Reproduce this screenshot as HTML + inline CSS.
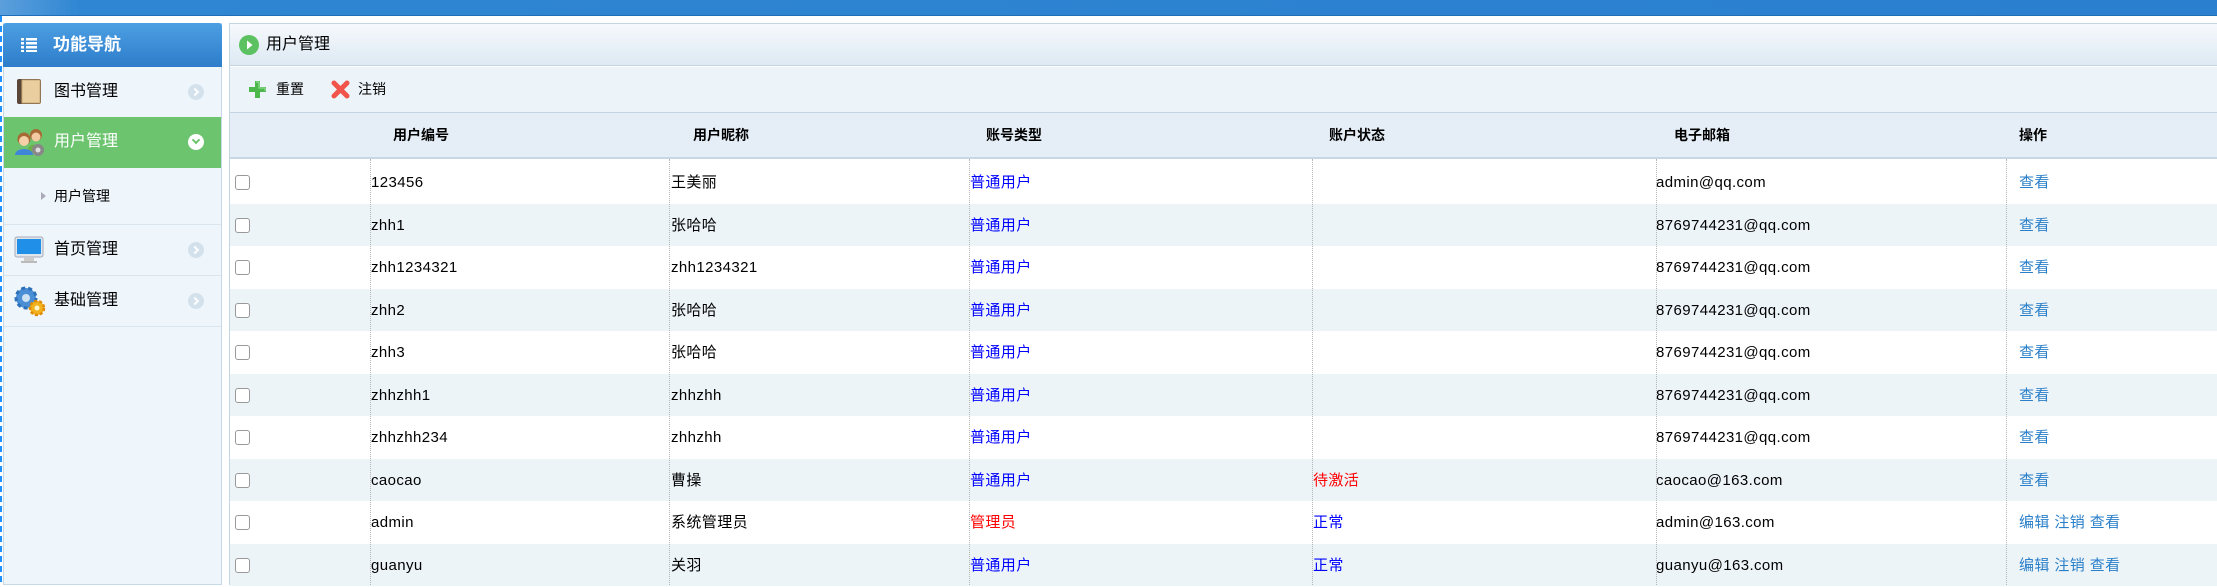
<!DOCTYPE html>
<html><head><meta charset="utf-8"><style>
*{margin:0;padding:0;box-sizing:border-box}
body{width:2217px;height:585px;overflow:hidden;background:#fff;font-family:"Liberation Sans","Noto Sans CJK SC",sans-serif;position:relative}
.abs{position:absolute}
#top{left:0;top:0;width:2217px;height:16px;background:linear-gradient(90deg,#5b9fdc 0,#2f86d2 80px,#2a80cf 100%);border-bottom:1px solid #1f6fb8}
#dash{left:0;top:16px;width:2px;height:569px;background:repeating-linear-gradient(180deg,#1e90ff 0 6px,transparent 6px 10px)}
#side{left:3px;top:23px;width:219px;height:562px;background:#eff6fb;border:1px solid #c8d9e6;border-top:none}
#sh{left:3px;top:23px;width:219px;height:44px;background:linear-gradient(#4d9fe3,#2d7dca);border-radius:3px 3px 0 0;color:#fff;font-weight:bold;font-size:17px}
.item{left:4px;width:217px;height:51px;border-bottom:1px solid #d9e6ef;font-size:16px;color:#000}
.item span{position:absolute;left:50px;top:0;line-height:50px}
.arr{position:absolute;left:184px;top:17px;width:16px;height:16px;border-radius:50%;background:#d3e1ec}
.arr:after{content:"";position:absolute;left:4px;top:5px;width:4px;height:4px;border-right:2px solid #fff;border-top:2px solid #fff;transform:rotate(45deg)}
#main{left:229px;top:23px;width:1988px;height:562px;border:1px solid #c5d6e3;border-right:none;background:#fff}
#title{left:230px;top:24px;width:1987px;height:42px;background:linear-gradient(#f6f9fc,#dde9f3);border-bottom:1px solid #c3d5e3;font-size:16px}
#tool{left:230px;top:67px;width:1987px;height:46px;background:#edf4f9;border-bottom:1px solid #c3d5e3;font-size:14px}
#thead{left:230px;top:113px;width:1987px;height:46px;background:#e5eef6;border-bottom:2px solid #c8d7e4;font-size:14px;font-weight:bold}
#thead span{position:absolute;top:0;line-height:44px;transform:translateX(-50%)}
.row{left:230px;width:1987px;height:42.5px;font-size:15px;letter-spacing:0.4px}
.row.alt{background:#edf4f8}
.row span{position:absolute;top:0;line-height:43px;white-space:nowrap}
.cb{position:absolute;left:5px;top:14px;width:15px;height:15px;border:1px solid #999;border-radius:3px;background:#fff}
.vl{position:absolute;top:159px;height:426px;border-left:1px dotted #b5b5b5}
.b{color:#0000ff}.r{color:#ff0000}.l{color:#2a7fc9}
</style></head><body>
<div id="top" class="abs"></div>
<div id="dash" class="abs"></div>
<div id="side" class="abs"></div>
<div id="sh" class="abs">
 <svg class="abs" style="left:18px;top:15px" width="16" height="14"><g fill="#fff"><rect x="0" y="0" width="3" height="2.5"/><rect x="5" y="0" width="11" height="2.5"/><rect x="0" y="4" width="3" height="2.5"/><rect x="5" y="4" width="11" height="2.5"/><rect x="0" y="8" width="3" height="2.5"/><rect x="5" y="8" width="11" height="2.5"/><rect x="0" y="12" width="3" height="2"/><rect x="5" y="12" width="11" height="2"/></g></svg>
 <span class="abs" style="left:50px;top:0;line-height:44px">功能导航</span>
</div>
<div class="item abs" style="top:67px">
 <svg class="abs" style="left:12px;top:11px" width="26" height="27"><rect x="1" y="1" width="24" height="25" rx="2" fill="#5a4638"/><rect x="6" y="2" width="18" height="23" fill="#e9cfa0"/><rect x="6" y="2" width="18" height="23" fill="none" stroke="#c9a875"/></svg>
 <span>图书管理</span><i class="arr"></i></div>
<div class="item abs" style="top:117px;background:#6cc46f;border-bottom:none;height:51px">
 <svg class="abs" style="left:10px;top:10px" width="32" height="30"><circle cx="22" cy="8" r="6" fill="#a86a34"/><circle cx="22" cy="10" r="4.5" fill="#f2c9a0"/><path d="M14 22c0-6 16-6 16 0v3H14z" fill="#6db04a"/><circle cx="10" cy="12" r="6.5" fill="#a86a34"/><circle cx="10" cy="14" r="5" fill="#f5cfa8"/><path d="M1 28c0-8 18-8 18 0z" fill="#3f86d8"/><circle cx="24" cy="23" r="6" fill="#888"/><circle cx="24" cy="23" r="2.5" fill="#ddd"/></svg>
 <span style="color:#fff">用户管理</span>
 <i class="abs" style="left:184px;top:17px;width:16px;height:16px;border-radius:50%;background:#fff"></i>
 <i class="abs" style="left:189px;top:20px;width:6px;height:6px;border-right:2px solid #6cc46f;border-bottom:2px solid #6cc46f;transform:rotate(45deg)"></i>
</div>
<div class="item abs" style="top:168px;height:57px">
 <i class="abs" style="left:37px;top:24px;width:0;height:0;border-left:5px solid #aab;border-top:4px solid transparent;border-bottom:4px solid transparent"></i>
 <span style="left:50px;line-height:56px;font-size:14px">用户管理</span></div>
<div class="item abs" style="top:225px">
 <svg class="abs" style="left:10px;top:11px" width="30" height="28"><rect x="1" y="1" width="28" height="20" rx="2" fill="#dfe6ec" stroke="#aab"/><rect x="3" y="3" width="24" height="15" fill="#1f8fe8"/><rect x="10" y="21" width="10" height="4" fill="#ccc"/><rect x="7" y="25" width="16" height="2" fill="#bbb"/></svg>
 <span>首页管理</span><i class="arr"></i></div>
<div class="item abs" style="top:276px">
 <svg class="abs" style="left:10px;top:9px" width="32" height="32"><circle cx="12" cy="13" r="10" fill="#4a8ed6" stroke="#2d6fb8" stroke-width="3" stroke-dasharray="4 3"/><circle cx="12" cy="13" r="4" fill="#cfe2f5"/><circle cx="23" cy="23" r="7" fill="#f2b21e" stroke="#e08a00" stroke-width="2.5" stroke-dasharray="3 2"/><circle cx="23" cy="23" r="2.5" fill="#fff5cc"/></svg>
 <span>基础管理</span><i class="arr"></i></div>

<div id="main" class="abs"></div>
<div id="title" class="abs">
 <svg class="abs" style="left:9px;top:11px" width="20" height="20"><circle cx="10" cy="10" r="10" fill="#5cc160"/><path d="M8 5.5L13.5 10 8 14.5z" fill="#fff"/></svg>
 <span class="abs" style="left:36px;top:0;line-height:42px">用户管理</span></div>
<div id="tool" class="abs">
 <svg class="abs" style="left:19px;top:14px" width="17" height="17"><path d="M6 0h5v6h6v5h-6v6H6v-6H0V6h6z" fill="#4cb84c"/><path d="M7 1h3v6h6v3" fill="none" stroke="#9de09d" stroke-width="1"/></svg>
 <span class="abs" style="left:46px;top:0;line-height:45px">重置</span>
 <svg class="abs" style="left:101px;top:13px" width="19" height="19"><path d="M3 3L16 16M16 3L3 16" stroke="#f0544a" stroke-width="5" stroke-linecap="round"/></svg>
 <span class="abs" style="left:128px;top:0;line-height:45px">注销</span></div>
<div id="thead" class="abs">
 <span style="left:191px">用户编号</span><span style="left:491px">用户昵称</span><span style="left:784px">账号类型</span><span style="left:1127px">账户状态</span><span style="left:1472px">电子邮箱</span><span style="left:1803px">操作</span></div>

<div class="row abs" style="top:161px"><i class="cb"></i><span style="left:141px">123456</span><span style="left:441px">王美丽</span><span class="b" style="left:740px">普通用户</span><span style="left:1426px">admin@qq.com</span><span class="l" style="left:1789px">查看</span></div>
<div class="row abs alt" style="top:203.5px"><i class="cb"></i><span style="left:141px">zhh1</span><span style="left:441px">张哈哈</span><span class="b" style="left:740px">普通用户</span><span style="left:1426px">8769744231@qq.com</span><span class="l" style="left:1789px">查看</span></div>
<div class="row abs" style="top:246px"><i class="cb"></i><span style="left:141px">zhh1234321</span><span style="left:441px">zhh1234321</span><span class="b" style="left:740px">普通用户</span><span style="left:1426px">8769744231@qq.com</span><span class="l" style="left:1789px">查看</span></div>
<div class="row abs alt" style="top:288.5px"><i class="cb"></i><span style="left:141px">zhh2</span><span style="left:441px">张哈哈</span><span class="b" style="left:740px">普通用户</span><span style="left:1426px">8769744231@qq.com</span><span class="l" style="left:1789px">查看</span></div>
<div class="row abs" style="top:331px"><i class="cb"></i><span style="left:141px">zhh3</span><span style="left:441px">张哈哈</span><span class="b" style="left:740px">普通用户</span><span style="left:1426px">8769744231@qq.com</span><span class="l" style="left:1789px">查看</span></div>
<div class="row abs alt" style="top:373.5px"><i class="cb"></i><span style="left:141px">zhhzhh1</span><span style="left:441px">zhhzhh</span><span class="b" style="left:740px">普通用户</span><span style="left:1426px">8769744231@qq.com</span><span class="l" style="left:1789px">查看</span></div>
<div class="row abs" style="top:416px"><i class="cb"></i><span style="left:141px">zhhzhh234</span><span style="left:441px">zhhzhh</span><span class="b" style="left:740px">普通用户</span><span style="left:1426px">8769744231@qq.com</span><span class="l" style="left:1789px">查看</span></div>
<div class="row abs alt" style="top:458.5px"><i class="cb"></i><span style="left:141px">caocao</span><span style="left:441px">曹操</span><span class="b" style="left:740px">普通用户</span><span class="r" style="left:1083px">待激活</span><span style="left:1426px">caocao@163.com</span><span class="l" style="left:1789px">查看</span></div>
<div class="row abs" style="top:501px"><i class="cb"></i><span style="left:141px">admin</span><span style="left:441px">系统管理员</span><span class="r" style="left:740px">管理员</span><span class="b" style="left:1083px">正常</span><span style="left:1426px">admin@163.com</span><span class="l" style="left:1789px">编辑 注销 查看</span></div>
<div class="row abs alt" style="top:543.5px"><i class="cb"></i><span style="left:141px">guanyu</span><span style="left:441px">关羽</span><span class="b" style="left:740px">普通用户</span><span class="b" style="left:1083px">正常</span><span style="left:1426px">guanyu@163.com</span><span class="l" style="left:1789px">编辑 注销 查看</span></div>

<i class="vl" style="left:370px"></i><i class="vl" style="left:669px"></i><i class="vl" style="left:969px"></i><i class="vl" style="left:1312px"></i><i class="vl" style="left:1656px"></i><i class="vl" style="left:2006px"></i>
</body></html>
